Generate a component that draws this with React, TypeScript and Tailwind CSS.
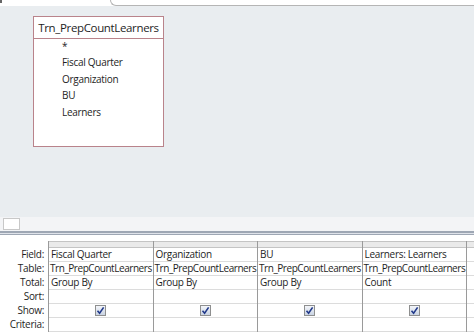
const fields = ["*", "Fiscal Quarter", "Organization", "BU", "Learners"]

const columns = [
  { field: "Fiscal Quarter", table: "Trn_PrepCountLearners", total: "Group By" },
  { field: "Organization", table: "Trn_PrepCountLearners", total: "Group By" },
  { field: "BU", table: "Trn_PrepCountLearners", total: "Group By" },
  { field: "Learners: Learners", table: "Trn_PrepCountLearners", total: "Count" },
]

const labels = ["Field:", "Table:", "Total:", "Sort:", "Show:", "Criteria:"]

function CheckBox() {
  return (
    <div className="w-[11px] h-[11px] border border-[#8e8f8f] bg-gradient-to-b from-[#f4f6fa] to-[#c9d3e2] flex items-center justify-center">
      <svg width="9" height="9" viewBox="0 0 9 9">
        <path d="M1.5 4.8 L3.6 7.2 L7.6 1.4" fill="none" stroke="#21398a" strokeWidth="1.6" />
      </svg>
    </div>
  )
}

export default function App() {
  return (
    <div
      className="w-[474px] h-[333px] bg-white overflow-hidden text-[#1e1e1e]"
      style={{ fontFamily: '"Open Sans", "Noto Sans", sans-serif' }}
    >
      {/* top tab strip */}
      <div className="h-[6px] flex">
        <div className="w-[110px] bg-white relative">
          <div className="absolute left-0 top-0 w-[2px] h-[3px] bg-[#666]"></div>
        </div>
        <div className="flex-1 border-b border-l border-[#b5b5b5] rounded-bl-[6px] bg-white"></div>
      </div>

      {/* table design pane */}
      <div className="h-[211px] bg-[#e9edf0] pt-[10px] pl-[33px]">
        <div className="w-[131px] h-[131px] bg-white border border-[#b9838b]">
          <div className="h-[22px] border-b border-[#b9838b] flex items-center justify-center text-[11.5px] tracking-[-0.35px]">
            Trn_PrepCountLearners
          </div>
          <div className="pl-[28px] text-[10px] tracking-[-0.3px]">
            {fields.map((f) => (
              <div key={f} className="h-[16.4px] leading-[15px]">{f}</div>
            ))}
          </div>
        </div>
      </div>

      {/* horizontal scrollbar */}
      <div className="h-[14px] bg-[#f3f4f6] flex items-center pl-[3px]">
        <div className="w-[17px] h-[12px] bg-white border border-[#c8c8c8]"></div>
      </div>

      {/* splitter */}
      <div className="h-[4px] border-t-2 border-b border-[#9ea7b4] bg-[#dfe3ea]"></div>

      {/* grid */}
      <div className="pt-[6px] flex text-[10px] tracking-[-0.3px]">
        <div className="w-[48px] shrink-0 pt-[7px]">
          {labels.map((l) => (
            <div key={l} className="h-[14px] leading-[13px] text-right pr-[4px]">{l}</div>
          ))}
        </div>
        {[...columns, null].map((c, i) => (
          <div key={i} className="w-[104.5px] shrink-0 border-l border-[#9a9a9a]">
            <div className="h-[7px] bg-[#eaeaea] border-t border-b border-[#c4c4c4]"></div>
            <div className="h-[14px] leading-[13px] pl-[2px] border-b border-[#dcdcdc] whitespace-nowrap overflow-hidden">{c?.field}</div>
            <div className="h-[14px] leading-[13px] pl-[1px] border-b border-[#dcdcdc] whitespace-nowrap overflow-hidden tracking-[-0.45px]">{c?.table}</div>
            <div className="h-[14px] leading-[13px] pl-[2px] border-b border-[#dcdcdc] whitespace-nowrap overflow-hidden">{c?.total}</div>
            <div className="h-[14px] border-b border-[#dcdcdc]"></div>
            <div className="h-[14px] border-b border-[#dcdcdc] flex items-center justify-center">
              {c && <CheckBox />}
            </div>
            <div className="h-[14px] border-b border-[#dcdcdc]"></div>
          </div>
        ))}
      </div>
    </div>
  )
}
